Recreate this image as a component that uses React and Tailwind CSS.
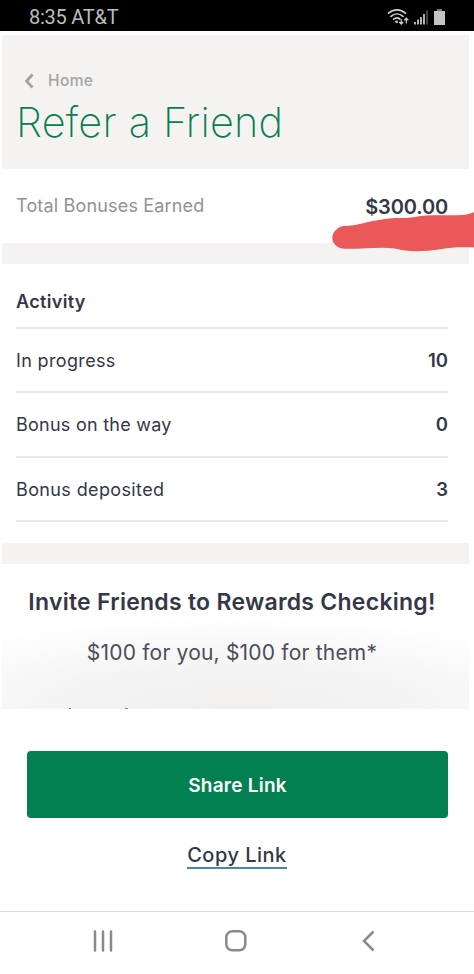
import React from "react";

const activity = [
  { label: "In progress", value: "10", spacing: "tracking-[0.35px]", height: "h-[64px]" },
  { label: "Bonus on the way", value: "0", spacing: "tracking-[0.25px]", height: "h-[65px]" },
  { label: "Bonus deposited", value: "3", spacing: "tracking-[0.37px]", height: "h-[64px]" },
];

function StatusBar() {
  return (
    <div className="flex h-[31px] items-center justify-between bg-black pr-[27px] pl-[29px] text-[#bdbdbd]">
      <span className="pt-[3px] font-[Roboto,sans-serif] text-[20px] leading-6 tracking-[-0.25px]">8:35 AT&amp;T</span>
      <svg width="60" height="20" viewBox="0 0 60 20" fill="none" className="mt-[2px]">
        <g stroke="#d0d0d0" strokeWidth="1.7" strokeLinecap="round">
          <path d="M1.5 6.2C6.5 1.8 13.5 1.8 18.5 6.2" />
          <path d="M4 9.4C7.6 6.2 12.4 6.2 16 9.4" />
          <path d="M6.7 12.2C8.8 10.5 11 10.5 12.8 12" />
        </g>
        <circle cx="9.6" cy="14.8" r="1.4" fill="#d0d0d0" />
        <path d="M14.2 12V17M12.2 15L14.2 17.2L16.2 15M19.3 16.5V11.5M17.3 13.4L19.3 11.2L21.3 13.4" stroke="#d0d0d0" strokeWidth="1.2" />
        <path d="M28 17.5V15M31 17.5V12.5M34 17.5V10M37 17.5V7" stroke="#c4c4c4" strokeWidth="1.8" />
        <path d="M40 17.5V3.5" stroke="#555" strokeWidth="1.6" />
        <path d="M50 2H55V4H50Z" fill="#777" />
        <path d="M47 4H58V18H47Z" fill="#c4c4c4" />
      </svg>
    </div>
  );
}

function PageHeader() {
  return (
    <header className="h-[134px] bg-[#f4f3f2] pt-9 pl-[14px]">
      <div className="flex h-5 items-center text-[#a3a3a3]">
        <svg width="12" height="16" viewBox="0 0 12 16" fill="none" className="ml-[7px]">
          <path d="M9.5 1.5L3.5 8L9.5 14.5" stroke="currentColor" strokeWidth="2.8" />
        </svg>
        <span className="ml-[13px] text-[15.5px] font-medium tracking-[0.4px]">Home</span>
      </div>
      <h1 className="mt-[6px] text-[41.5px] leading-[50px] font-extralight tracking-[0.18px] text-[#0a7d50]">
        Refer a Friend
      </h1>
    </header>
  );
}

function ActivityCard() {
  return (
    <section className="h-[279px] bg-white pr-[21px] pl-[14px]">
      <h2 className="flex h-[65px] items-center border-b-2 border-[#e9e9e9] pt-[11px] text-[18px] font-semibold tracking-[0.35px]">
        Activity
      </h2>
      {activity.map((row) => (
        <div
          key={row.label}
          className={`flex items-center justify-between border-b-2 border-[#e9e9e9] text-[18px] ${row.height}`}
        >
          <span className={row.spacing}>{row.label}</span>
          <span className="pt-px text-[18.5px] font-semibold">{row.value}</span>
        </div>
      ))}
    </section>
  );
}

export default function App() {
  return (
    <div className="flex h-[974px] w-[474px] flex-col overflow-hidden bg-white font-[Inter,sans-serif] text-[#343747]">
      <StatusBar />

      <main className="mt-1 mr-[5px] ml-[2px] h-[674px] bg-[#f4f3f2]">
        <PageHeader />

        <section className="relative flex h-[74px] items-center justify-between bg-white pr-[21px] pl-[14px]">
          <span className="pb-[2px] text-[18px] tracking-[0.17px] text-[#929292]">Total Bonuses Earned</span>
          <span className="mt-px text-[20px] font-semibold tracking-[-0.15px]">$300.00</span>
          {/* red marker stroke under the total */}
          <svg className="absolute top-[43px] left-[329px]" width="144" height="42" viewBox="0 0 144 42">
            <path
              d="M12 14C28 14 36 9 54 7C65 5 72 7 84 5C98 2 117 4 132 3C136 3 139 1 144 0V35.5C132 35 120 35 111 37C91 40 77 40 64 36.5C46 34 27 38 11 36.5C-4 32 0 17 12 14Z"
              fill="#eb5859"
            />
          </svg>
        </section>

        <div className="h-[21px]" />
        <ActivityCard />
        <div className="h-[21px]" />

        <section className="relative h-[145px] overflow-hidden bg-white bg-[radial-gradient(ellipse_85%_65%_at_50%_100%,#f0efee,#f5f4f4_45%,#ffffff)] pr-[7px] text-center">
          <h2 className="pt-[23px] text-[23px] leading-[30px] font-semibold tracking-[0.26px] whitespace-nowrap">
            Invite Friends to Rewards Checking!
          </h2>
          <p className="mt-[22px] text-[21px] leading-7 tracking-[0.2px] text-[#4b4d59]">$100 for you, $100 for them*</p>
          {/* tops of the next line, cut off by the footer */}
          <span className="absolute bottom-0 left-[67px] h-px w-[2px] bg-[#8a8b92]" />
          <span className="absolute bottom-0 left-[123px] h-px w-[3px] bg-[#8a8b92]" />
        </section>
      </main>

      <footer className="flex h-[202px] flex-col items-center pt-[42px]">
        <button type="button" className="ml-[1px] h-[67px] w-[421px] rounded-[4px] bg-[#02804f] pt-[3px] text-[19px] font-semibold tracking-[0.25px] text-white">
          Share Link
        </button>
        <a href="#" className="mt-[26px] border-b-2 border-[#4a86a8] text-[20px] leading-[23px] font-medium tracking-[0.5px]">
          Copy Link
        </a>
      </footer>

      <nav className="h-[63px] border-t border-[#dcdcdc]">
        <svg width="474" height="62" viewBox="0 0 474 62" fill="none" stroke="#8a8a8a" strokeWidth="2.5">
          <path d="M95 19.5V38.5M103 19.5V38.5M111 19.5V38.5" strokeLinecap="round" />
          <rect x="226.3" y="19.3" width="19" height="19" rx="6" />
          <path d="M373.5 19.5L364 29L373.5 38.5" />
        </svg>
      </nav>
    </div>
  );
}
